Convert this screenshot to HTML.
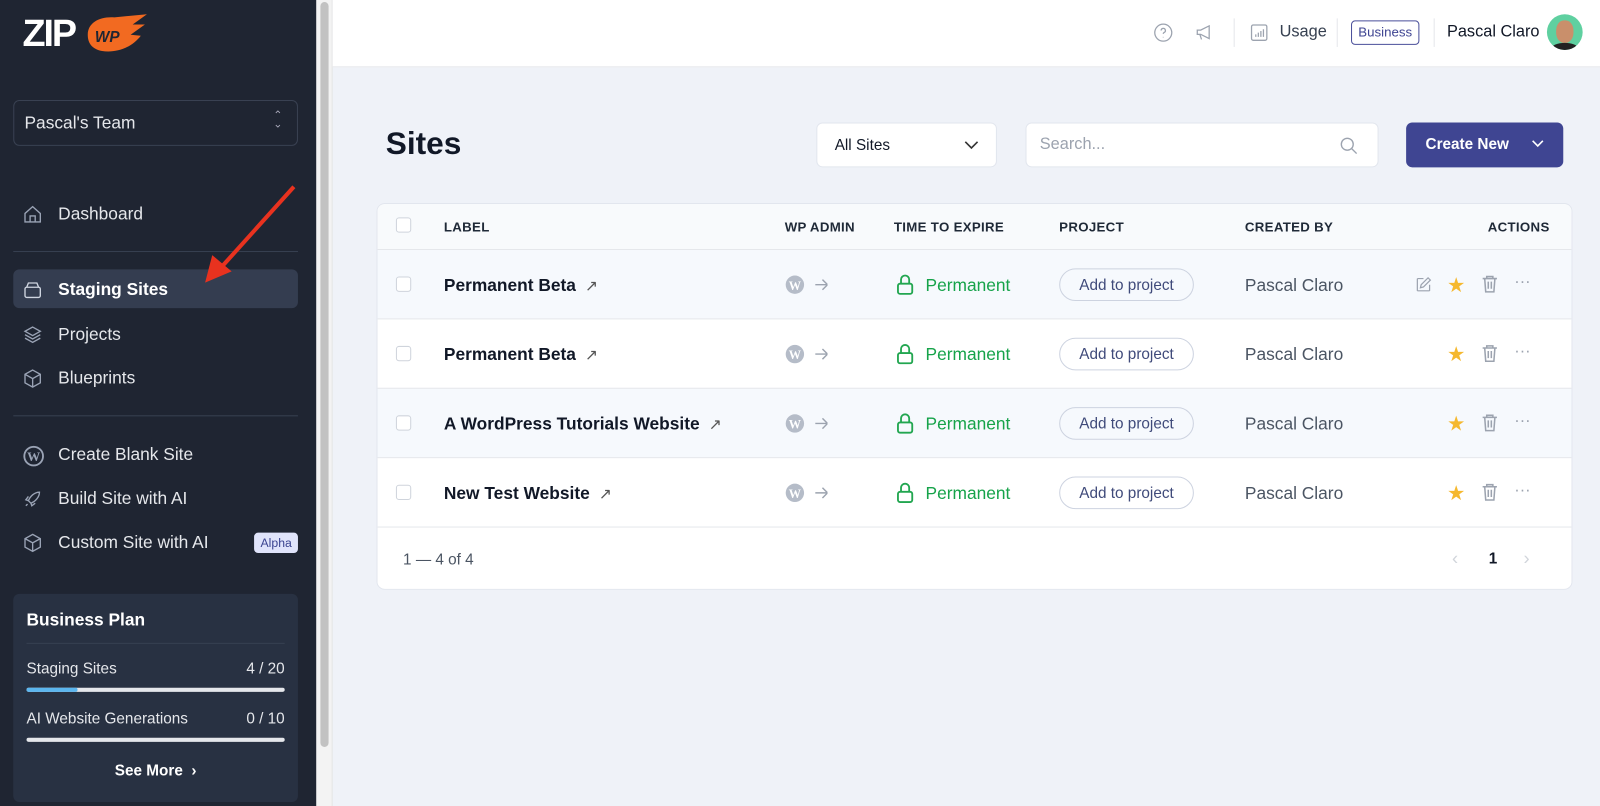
<!DOCTYPE html>
<html><head><meta charset="utf-8"><style>
*{box-sizing:border-box;margin:0;padding:0}
body{width:1600px;height:806px;overflow:hidden;font-family:"Liberation Sans",sans-serif;background:#eff2f8;position:relative}
#w{position:absolute;left:0;top:0;width:1568px;height:790px;transform:scale(1.020408);transform-origin:0 0}
.sb{position:absolute;left:0;top:0;width:310px;height:790px;background:#1f2532;color:#e5e7eb}
.scroll{position:absolute;left:310px;top:0;width:16px;height:790px;background:#f3f3f3;border-right:1px solid #e5e5e5}
.scroll div{position:absolute;left:4px;top:2px;width:8px;height:730px;background:#c2c2c2;border-radius:4px}
.abs{position:absolute}
.team{left:13px;top:98px;width:279px;height:45px;border:1px solid #394152;border-radius:6px;font-size:17px;padding:12px 10px}
.nav{left:13px;width:279px;height:38px;font-size:17px;padding:10px 0 0 44px;color:#e5e7eb}
.nav svg{position:absolute;left:9px;top:10px}
.sep{left:13px;width:279px;height:1px;background:#374051}
.hdr{position:absolute;left:326px;top:0;right:0;height:66px;background:#fff;border-bottom:1px solid #e5e7eb}
.card{left:369px;top:199px;width:1172px;height:379px;background:#fff;border:1px solid #e2e6ee;border-radius:8px;overflow:hidden}
.row{position:absolute;left:0;width:100%;height:68px;border-top:1px solid #e5e7eb}
.th{position:absolute;top:15px;font-size:13px;font-weight:bold;color:#1f2937;letter-spacing:.3px}
.cb{position:absolute;left:18px;width:15px;height:15px;border:1px solid #cfd4dc;border-radius:3px;background:#fff}
.lbl{position:absolute;left:65px;top:25px;font-size:17px;font-weight:bold;color:#111827}
.perm{position:absolute;left:508px;top:25px;font-size:17px;color:#16a34a}
.atp{position:absolute;left:668px;top:18px;width:132px;height:32px;border:1px solid #cdd3e0;border-radius:16px;font-size:15px;color:#3f4a7a;text-align:center;line-height:31px}
.cr{position:absolute;left:850px;top:25px;font-size:17px;color:#4b5563}
.dots{position:absolute;left:1114px;top:24px;color:#9ca3af;font-size:16px;line-height:16px}
</style></head><body><div id="w">
<div class="sb">
 <div class="abs" style="left:22px;top:12px;font-size:37px;font-weight:900;color:#fff;letter-spacing:-2px">ZIP</div>
 <svg class="abs" style="left:82px;top:12px" width="64" height="40" viewBox="0 0 64 40"><path d="M4 22 C4 10 16 4 30 5 L62 2 L48 12 L60 12 L46 22 L56 23 C46 36 30 40 18 38 C8 36 4 30 4 22Z" fill="#f26a21"/><text x="11" y="29" font-size="15" font-weight="bold" font-style="italic" fill="#1f2532" font-family="Liberation Sans">WP</text></svg>
 <div class="abs team">Pascal's Team<span style="position:absolute;right:14px;top:10px;font-size:11px;color:#aab;line-height:9px">⌃<br>⌄</span></div>
 <div class="abs nav" style="top:190px"><svg width="20" height="20" viewBox="0 0 24 24" fill="none" stroke="#9aa3b5" stroke-width="1.6"><path d="M3 11 L12 3 L21 11 V21 H3Z M9 21 V14 H15 V21"/></svg>Dashboard</div>
 <div class="abs sep" style="top:246px"></div>
 <div class="abs nav" style="top:264px;background:#343d50;border-radius:6px;font-weight:bold;color:#fff"><svg width="20" height="20" viewBox="0 0 24 24" fill="none" stroke="#cfd5e0" stroke-width="1.6"><rect x="3" y="9" width="18" height="12" rx="2"/><path d="M5 9 L7 4 H17 L19 9"/></svg>Staging Sites</div>
 <div class="abs nav" style="top:308px"><svg width="20" height="20" viewBox="0 0 24 24" fill="none" stroke="#9aa3b5" stroke-width="1.6"><path d="M12 3 L21 8 L12 13 L3 8Z M3 12 L12 17 L21 12 M3 16 L12 21 L21 16"/></svg>Projects</div>
 <div class="abs nav" style="top:351px"><svg width="20" height="20" viewBox="0 0 24 24" fill="none" stroke="#9aa3b5" stroke-width="1.6"><path d="M12 2 L21 7 V17 L12 22 L3 17 V7Z M3 7 L12 12 L21 7 M12 12 V22"/></svg>Blueprints</div>
 <div class="abs sep" style="top:407px"></div>
 <div class="abs nav" style="top:426px"><svg width="22" height="22" viewBox="0 0 24 24"><circle cx="12" cy="12" r="10" fill="none" stroke="#9aa3b5" stroke-width="2"/><text x="12" y="17" text-anchor="middle" font-size="14" font-weight="bold" fill="#9aa3b5" font-family="Liberation Serif">W</text></svg>Create Blank Site</div>
 <div class="abs nav" style="top:469px"><svg width="20" height="20" viewBox="0 0 24 24" fill="none" stroke="#9aa3b5" stroke-width="1.6"><path d="M20 4 C14 4 9 9 7 14 L10 17 C15 15 20 10 20 4Z M7 14 L4 13 L7 9 M10 17 L11 20 L15 17 M6 18 L4 20"/></svg>Build Site with AI</div>
 <div class="abs nav" style="top:512px"><svg width="20" height="20" viewBox="0 0 24 24" fill="none" stroke="#9aa3b5" stroke-width="1.6"><path d="M12 2 L21 7 V17 L12 22 L3 17 V7Z M3 7 L12 12 L21 7 M12 12 V22"/></svg>Custom Site with AI<span style="position:absolute;right:0;top:10px;background:#e0e4fb;color:#3b4490;font-size:12px;padding:3px 6px;border-radius:4px">Alpha</span></div>
 <div class="abs" style="left:13px;top:582px;width:279px;height:204px;background:#283142;border-radius:6px;padding:16px 13px">
  <div style="font-size:17px;font-weight:bold;color:#fff">Business Plan</div>
  <div style="height:1px;background:#374051;margin:12px 0 16px"></div>
  <div style="font-size:15px;display:flex;justify-content:space-between">Staging Sites<span>4 / 20</span></div>
  <div style="height:4px;background:#e5e7eb;border-radius:2px;margin:10px 0 18px;position:relative"><div style="width:50px;height:4px;background:#5bb6ef;border-radius:2px"></div></div>
  <div style="font-size:15px;display:flex;justify-content:space-between">AI Website Generations<span>0 / 10</span></div>
  <div style="height:4px;background:#e5e7eb;border-radius:2px;margin:10px 0 20px"></div>
  <div style="text-align:center;font-size:15px;font-weight:bold;color:#fff">See More &nbsp;›</div>
 </div>
</div>
<div class="scroll"><div></div></div>
<div class="hdr">
 <svg class="abs" style="left:804px;top:22px" width="20" height="20" viewBox="0 0 24 24" fill="none" stroke="#9ca3af" stroke-width="1.5"><circle cx="12" cy="12" r="10"/><path d="M9.5 9.5 a2.5 2.5 0 1 1 3.5 2.3 c-.7.4-1 .9-1 1.7 M12 17 v.5"/></svg>
 <svg class="abs" style="left:844px;top:22px" width="20" height="20" viewBox="0 0 24 24" fill="none" stroke="#9ca3af" stroke-width="1.5"><path d="M4 9 H8 L18 4 V19 L8 14 H4Z M7 14 L9 20"/></svg>
 <div class="abs" style="left:883px;top:18px;width:1px;height:28px;background:#e5e7eb"></div>
 <svg class="abs" style="left:898px;top:22px" width="20" height="20" viewBox="0 0 24 24" fill="none" stroke="#9ca3af" stroke-width="1.5"><rect x="3" y="3" width="18" height="18" rx="2"/><path d="M8 17v-3 M11 17v-5 M14 17v-7 M17 17v-9"/></svg>
 <div class="abs" style="left:928px;top:23px;font-size:16px;color:#374151">Usage</div>
 <div class="abs" style="left:984px;top:18px;width:1px;height:28px;background:#e5e7eb"></div>
 <div class="abs" style="left:998px;top:20px;width:67px;height:24px;border:1.5px solid #4a4f9a;border-radius:4px;font-size:13px;color:#3f4592;text-align:center;line-height:21px">Business</div>
 <div class="abs" style="left:1079px;top:18px;width:1px;height:28px;background:#e5e7eb"></div>
 <div class="abs" style="left:1092px;top:23px;font-size:16px;color:#111827">Pascal Claro</div>
 <div class="abs" style="left:1190px;top:14px;width:35px;height:35px;border-radius:50%;background:#5fd0a0;overflow:hidden"><div style="position:absolute;left:9px;top:6px;width:17px;height:22px;background:#c98f6b;border-radius:45%"></div><div style="position:absolute;left:5px;top:28px;width:25px;height:10px;background:#222;border-radius:50% 50% 0 0"></div></div>
</div>
<div class="abs" style="left:378px;top:123px;font-size:31px;font-weight:bold;color:#111827">Sites</div>
<div class="abs" style="left:800px;top:120px;width:177px;height:44px;background:#fff;border:1px solid #e2e6ee;border-radius:6px;font-size:15px;padding:13px 17px;color:#111827">All Sites<svg style="position:absolute;right:16px;top:15px" width="16" height="12" viewBox="0 0 16 12" fill="none" stroke="#333" stroke-width="1.6"><path d="M2 3 L8 9 L14 3"/></svg></div>
<div class="abs" style="left:1005px;top:120px;width:346px;height:44px;background:#fff;border:1px solid #e2e6ee;border-radius:6px;font-size:16px;padding:12px 13px;color:#9ca3af">Search...<svg style="position:absolute;right:18px;top:12px" width="20" height="20" viewBox="0 0 24 24" fill="none" stroke="#9ca3af" stroke-width="1.6"><circle cx="10" cy="10" r="7"/><path d="M15 15 L21 21"/></svg></div>
<div class="abs" style="left:1378px;top:120px;width:154px;height:44px;background:#3f4592;border-radius:6px;color:#fff;font-size:15px;font-weight:bold;padding:13px 19px">Create New<svg style="position:absolute;right:18px;top:16px" width="14" height="10" viewBox="0 0 14 10" fill="none" stroke="#fff" stroke-width="1.6"><path d="M2 2 L7 7 L12 2"/></svg></div>
<div class="abs card">
 <div class="row" style="top:0;border:none;height:44px;background:#f8fafc">
  <div class="cb" style="top:13px"></div>
  <div class="th" style="left:65px">LABEL</div><div class="th" style="left:399px">WP ADMIN</div><div class="th" style="left:506px">TIME TO EXPIRE</div><div class="th" style="left:668px">PROJECT</div><div class="th" style="left:850px">CREATED BY</div><div class="th" style="left:1088px">ACTIONS</div>
 </div>
 <div class="row" style="top:44px;background:#f6f9fd"><div class="cb" style="top:26px"></div><div class="lbl">Permanent Beta <span style="font-weight:normal;color:#555;font-size:15px">&nbsp;↗</span></div>
 <svg class="abs" style="left:399px;top:24px" width="42" height="20" viewBox="0 0 42 20"><circle cx="10" cy="10" r="9" fill="#b5bcc8"/><text x="10" y="15" text-anchor="middle" font-size="12" font-weight="bold" fill="#fff" font-family="Liberation Serif">W</text><path d="M30 10 H42 M37 5 L42 10 L37 15" stroke="#9ca3af" stroke-width="1.4" fill="none"/></svg>
 <svg class="abs" style="left:508px;top:23px" width="18" height="22" viewBox="0 0 18 22" fill="none" stroke="#22a650" stroke-width="1.8"><rect x="2" y="10" width="14" height="10" rx="2"/><path d="M5 10 V6 a4 4 0 0 1 8 0 V10"/></svg><div class="perm" style="left:537px">Permanent</div>
 <div class="atp">Add to project</div><div class="cr">Pascal Claro</div>
 <svg class="abs" style="left:1016px;top:25px" width="18" height="18" viewBox="0 0 24 24" fill="none" stroke="#9ca3af" stroke-width="1.6"><path d="M4 20 H20 M4 4 H12 M4 4 V20 M20 12 V20 M8 16 L9 12 L18 3 L21 6 L12 15Z"/></svg>
 <div class="abs" style="left:1048px;top:22px;color:#f5b82e;font-size:20px">★</div>
 <svg class="abs" style="left:1082px;top:24px" width="16" height="18" viewBox="0 0 16 18" fill="none" stroke="#9ca3af" stroke-width="1.5"><path d="M1 4 H15 M5 4 V2 H11 V4 M3 4 L4 17 H12 L13 4 M6.5 7 V14 M9.5 7 V14"/></svg>
 <div class="dots">···</div></div>
 <div class="row" style="top:112px;background:#fff"><div class="cb" style="top:26px"></div><div class="lbl">Permanent Beta <span style="font-weight:normal;color:#555;font-size:15px">&nbsp;↗</span></div>
 <svg class="abs" style="left:399px;top:24px" width="42" height="20" viewBox="0 0 42 20"><circle cx="10" cy="10" r="9" fill="#b5bcc8"/><text x="10" y="15" text-anchor="middle" font-size="12" font-weight="bold" fill="#fff" font-family="Liberation Serif">W</text><path d="M30 10 H42 M37 5 L42 10 L37 15" stroke="#9ca3af" stroke-width="1.4" fill="none"/></svg>
 <svg class="abs" style="left:508px;top:23px" width="18" height="22" viewBox="0 0 18 22" fill="none" stroke="#22a650" stroke-width="1.8"><rect x="2" y="10" width="14" height="10" rx="2"/><path d="M5 10 V6 a4 4 0 0 1 8 0 V10"/></svg><div class="perm" style="left:537px">Permanent</div>
 <div class="atp">Add to project</div><div class="cr">Pascal Claro</div>
 <div class="abs" style="left:1048px;top:22px;color:#f5b82e;font-size:20px">★</div>
 <svg class="abs" style="left:1082px;top:24px" width="16" height="18" viewBox="0 0 16 18" fill="none" stroke="#9ca3af" stroke-width="1.5"><path d="M1 4 H15 M5 4 V2 H11 V4 M3 4 L4 17 H12 L13 4 M6.5 7 V14 M9.5 7 V14"/></svg>
 <div class="dots">···</div></div>
 <div class="row" style="top:180px;background:#f6f9fd"><div class="cb" style="top:26px"></div><div class="lbl">A WordPress Tutorials Website <span style="font-weight:normal;color:#555;font-size:15px">&nbsp;↗</span></div>
 <svg class="abs" style="left:399px;top:24px" width="42" height="20" viewBox="0 0 42 20"><circle cx="10" cy="10" r="9" fill="#b5bcc8"/><text x="10" y="15" text-anchor="middle" font-size="12" font-weight="bold" fill="#fff" font-family="Liberation Serif">W</text><path d="M30 10 H42 M37 5 L42 10 L37 15" stroke="#9ca3af" stroke-width="1.4" fill="none"/></svg>
 <svg class="abs" style="left:508px;top:23px" width="18" height="22" viewBox="0 0 18 22" fill="none" stroke="#22a650" stroke-width="1.8"><rect x="2" y="10" width="14" height="10" rx="2"/><path d="M5 10 V6 a4 4 0 0 1 8 0 V10"/></svg><div class="perm" style="left:537px">Permanent</div>
 <div class="atp">Add to project</div><div class="cr">Pascal Claro</div>
 <div class="abs" style="left:1048px;top:22px;color:#f5b82e;font-size:20px">★</div>
 <svg class="abs" style="left:1082px;top:24px" width="16" height="18" viewBox="0 0 16 18" fill="none" stroke="#9ca3af" stroke-width="1.5"><path d="M1 4 H15 M5 4 V2 H11 V4 M3 4 L4 17 H12 L13 4 M6.5 7 V14 M9.5 7 V14"/></svg>
 <div class="dots">···</div></div>
 <div class="row" style="top:248px;background:#fff"><div class="cb" style="top:26px"></div><div class="lbl">New Test Website <span style="font-weight:normal;color:#555;font-size:15px">&nbsp;↗</span></div>
 <svg class="abs" style="left:399px;top:24px" width="42" height="20" viewBox="0 0 42 20"><circle cx="10" cy="10" r="9" fill="#b5bcc8"/><text x="10" y="15" text-anchor="middle" font-size="12" font-weight="bold" fill="#fff" font-family="Liberation Serif">W</text><path d="M30 10 H42 M37 5 L42 10 L37 15" stroke="#9ca3af" stroke-width="1.4" fill="none"/></svg>
 <svg class="abs" style="left:508px;top:23px" width="18" height="22" viewBox="0 0 18 22" fill="none" stroke="#22a650" stroke-width="1.8"><rect x="2" y="10" width="14" height="10" rx="2"/><path d="M5 10 V6 a4 4 0 0 1 8 0 V10"/></svg><div class="perm" style="left:537px">Permanent</div>
 <div class="atp">Add to project</div><div class="cr">Pascal Claro</div>
 <div class="abs" style="left:1048px;top:22px;color:#f5b82e;font-size:20px">★</div>
 <svg class="abs" style="left:1082px;top:24px" width="16" height="18" viewBox="0 0 16 18" fill="none" stroke="#9ca3af" stroke-width="1.5"><path d="M1 4 H15 M5 4 V2 H11 V4 M3 4 L4 17 H12 L13 4 M6.5 7 V14 M9.5 7 V14"/></svg>
 <div class="dots">···</div></div>
 <div class="row" style="top:316px;height:63px;background:#fff">
  <div class="abs" style="left:25px;top:23px;font-size:15px;color:#4b5563">1 — 4 of 4</div>
  <div class="abs" style="left:1053px;top:20px;font-size:18px;color:#d1d5db">‹</div>
  <div class="abs" style="left:1089px;top:22px;font-size:15px;font-weight:bold;color:#111827">1</div>
  <div class="abs" style="left:1123px;top:20px;font-size:18px;color:#d1d5db">›</div>
 </div>
</div>
<svg class="abs" style="left:195px;top:180px" width="100" height="100" viewBox="0 0 100 100"><path d="M93 3 L20 84" stroke="#e8321f" stroke-width="4"/><path d="M6 97 L13 70 L32 86Z" fill="#e8321f"/></svg>
</div></body></html>
